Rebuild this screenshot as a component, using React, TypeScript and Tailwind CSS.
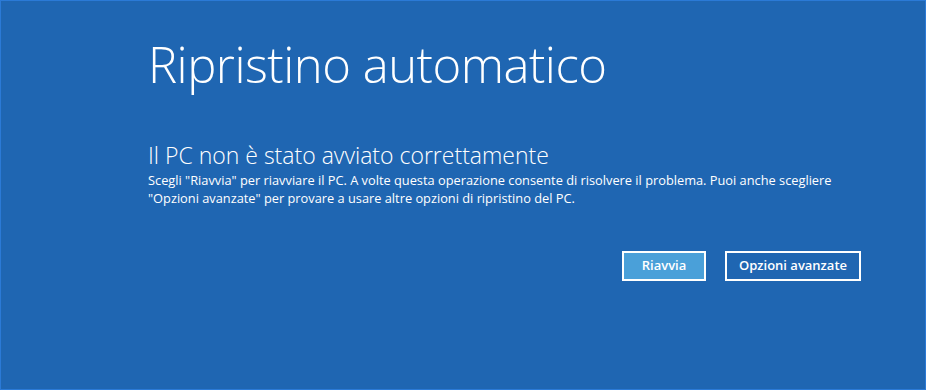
export default function App() {
  return (
    <div className="h-[390px] w-[926px] overflow-hidden border border-[#2b7ad6] bg-[#1f66b2] font-['Open_Sans',sans-serif] text-white">
      <div className="pl-[147px] pt-[27px]">
        <h1 className="text-[49px] font-light leading-[72px] tracking-[-0.5px]">Ripristino automatico</h1>
        <h2 className="mt-[40px] text-[23px] font-light leading-[30px]">Il PC non è stato avviato correttamente</h2>
        <p className="mt-[1px] w-[720px] text-[12.8px] leading-[18px]">
          Scegli "Riavvia" per riavviare il PC. A volte questa operazione consente di risolvere il problema. Puoi anche scegliere
          "Opzioni avanzate" per provare a usare altre opzioni di ripristino del PC.
        </p>
      </div>
      <div className="mt-[44px] flex justify-end gap-[19px] pr-[64px]">
        <button className="h-[30px] w-[84px] border-2 border-white bg-[#4aa0d9] text-[13px] font-semibold">Riavvia</button>
        <button className="h-[30px] w-[136px] border-2 border-white bg-[#1f66b2] text-[13px] font-semibold">Opzioni avanzate</button>
      </div>
    </div>
  );
}
